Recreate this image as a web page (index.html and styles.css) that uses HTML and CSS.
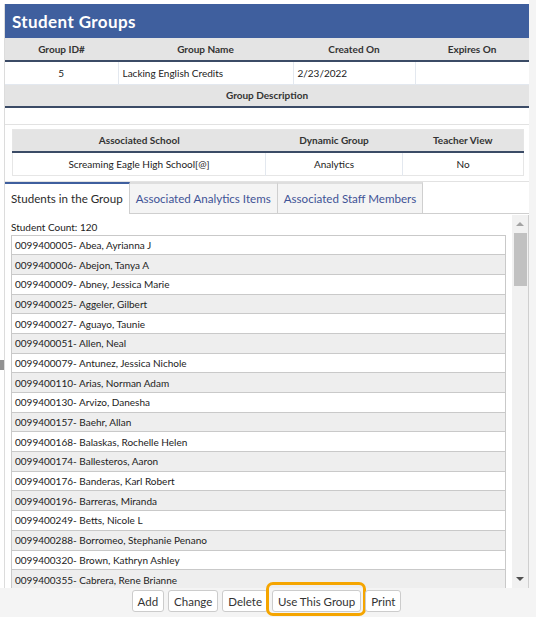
FILE: index.html
```html
<!DOCTYPE html>
<html lang="en">
<head>
<meta charset="utf-8">
<title>Student Groups</title>
<link rel="stylesheet" href="styles.css">
</head>
<body>
<div class="page">
  <div class="panel">
    <div class="title-bar">Student Groups</div>
    <table class="info">
      <colgroup><col class="c1"><col class="c2"><col class="c3"><col class="c4"></colgroup>
      <thead>
        <tr><th>Group ID#</th><th>Group Name</th><th>Created On</th><th>Expires On</th></tr>
      </thead>
      <tbody>
        <tr><td class="center">5</td><td>Lacking English Credits</td><td>2/23/2022</td><td></td></tr>
        <tr><th colspan="4" class="desc-head">Group Description</th></tr>
        <tr class="desc-row"><td colspan="4"></td></tr>
      </tbody>
    </table>
    <div class="school-wrap">
      <table class="school">
        <colgroup><col class="s1"><col class="s2"><col class="s3"></colgroup>
        <thead>
          <tr><th>Associated School</th><th>Dynamic Group</th><th>Teacher View</th></tr>
        </thead>
        <tbody>
          <tr><td>Screaming Eagle High School[@]</td><td>Analytics</td><td>No</td></tr>
        </tbody>
      </table>
    </div>
    <div class="tabs">
      <div class="tab active">Students in the Group</div>
      <div class="tab">Associated Analytics Items</div>
      <div class="tab">Associated Staff Members</div>
    </div>
    <div class="tab-panel">
      <div class="scroll-content">
        <div class="count">Student Count: 120</div>
        <div class="list">
          <div class="row">0099400005- Abea, Ayrianna J</div>
          <div class="row">0099400006- Abejon, Tanya A</div>
          <div class="row">0099400009- Abney, Jessica Marie</div>
          <div class="row">0099400025- Aggeler, Gilbert</div>
          <div class="row">0099400027- Aguayo, Taunie</div>
          <div class="row">0099400051- Allen, Neal</div>
          <div class="row">0099400079- Antunez, Jessica Nichole</div>
          <div class="row">0099400110- Arias, Norman Adam</div>
          <div class="row">0099400130- Arvizo, Danesha</div>
          <div class="row">0099400157- Baehr, Allan</div>
          <div class="row">0099400168- Balaskas, Rochelle Helen</div>
          <div class="row">0099400174- Ballesteros, Aaron</div>
          <div class="row">0099400176- Banderas, Karl Robert</div>
          <div class="row">0099400196- Barreras, Miranda</div>
          <div class="row">0099400249- Betts, Nicole L</div>
          <div class="row">0099400288- Borromeo, Stephanie Penano</div>
          <div class="row">0099400320- Brown, Kathryn Ashley</div>
          <div class="row">0099400355- Cabrera, Rene Brianne</div>
        </div>
      </div>
      <div class="scrollbar">
        <span class="arrow up"></span>
        <span class="thumb"></span>
        <span class="track"></span>
        <span class="arrow down"></span>
      </div>
    </div>
    <span class="grip"></span>
  </div>
</div>
<div class="actions">
  <button class="btn">Add</button>
  <button class="btn">Change</button>
  <button class="btn">Delete</button>
  <button class="btn highlighted">Use This Group</button>
  <button class="btn">Print</button>
</div>
</body>
</html>
```

FILE: styles.css
```css
* { box-sizing: border-box; }

html, body {
  margin: 0;
  padding: 0;
}

body {
  background: #f4f4f4;
  font-family: Lato, "Open Sans", sans-serif;
  color: #2b2b2b;
  width: 536px;
  height: 617px;
  overflow: hidden;
}

.page {
  width: 529px;
  height: 588px;
  background: #fff;
  padding: 4px 0 0 4px;
  overflow: hidden;
}

.panel {
  position: relative;
  height: 100%;
  display: flex;
  flex-direction: column;
  border-left: 1px solid #dcdcdc;
}

.title-bar {
  height: 34px;
  background: #3f5f9e;
  color: #fff;
  font-weight: 700;
  font-size: 17px;
  letter-spacing: 0.4px;
  padding-left: 7px;
  display: flex;
  align-items: center;
}

table {
  border-collapse: collapse;
  table-layout: fixed;
  font-size: 10px;
}

.info { width: 524px; }
.info .c1 { width: 113px; }
.info .c2 { width: 175px; }
.info .c3 { width: 122px; }
.info .c4 { width: 114px; }

th {
  background: #e4e4e4;
  font-weight: 700;
  color: #333;
  height: 23px;
  padding: 0 4px;
  border-bottom: 2px solid #3b4b66;
  text-align: center;
}

td {
  height: 23px;
  padding: 0 4px;
  color: #222;
  border-left: 1px solid #e3e8ef;
  border-bottom: 1px solid #e3e8ef;
}

td:first-child { border-left: none; }

.center { text-align: center; }

.desc-row td {
  height: 17px;
  border-bottom: 1px solid #e2e2e2;
}

.school-wrap {
  padding: 4px 7px 5px 7px;
  border-bottom: 1px solid #e2e2e2;
}

.school {
  width: 511px;
  border: 1px solid #e6e6e6;
}
.school .s1 { width: 253px; }
.school .s2 { width: 137px; }
.school .s3 { width: 121px; }
.school td { text-align: center; border-bottom: none; }

.tabs {
  display: flex;
  height: 32px;
  border-bottom: 1px solid #cfcfcf;
}

.tab {
  display: flex;
  align-items: center;
  padding: 0 6px;
  font-size: 11.6px;
  color: #3f5396;
  background: #f4f4f4;
  border-top: 2px solid #dedede;
  border-right: 1px solid #cfcfcf;
}

.tab.active {
  background: #fff;
  color: #2b2b2b;
  border-top: 2px solid #3f5f9e;
  margin-bottom: -1px;
}

.tab-panel {
  flex: 1;
  display: flex;
  min-height: 0;
  padding-top: 1px;
}

.scroll-content {
  flex: 1;
  overflow: hidden;
  padding: 5px 6px 0 6px;
}

.count {
  font-size: 10px;
  color: #222;
  height: 14px;
  line-height: 14px;
}

.list {
  border: 1px solid #c9c9c9;
  border-bottom: none;
  margin-top: 1px;
}

.row {
  height: 19.7px;
  border-bottom: 1px solid #c9c9c9;
  font-size: 10px;
  color: #222;
  padding-left: 3px;
  display: flex;
  align-items: center;
}

.row:nth-child(even) { background: #eeeeee; }

.scrollbar {
  width: 17px;
  background: #f1f1f1;
  display: flex;
  flex-direction: column;
  align-items: center;
  border-right: 1px solid #cfcfcf;
}

.arrow {
  width: 0;
  height: 0;
  border-left: 4px solid transparent;
  border-right: 4px solid transparent;
  margin: 7px 0;
}

.arrow.up { border-bottom: 4px solid #a3a3a3; }
.arrow.down { border-top: 4px solid #505050; }

.thumb {
  width: 13px;
  height: 53px;
  background: #c1c1c1;
}

.track { flex: 1; }

.grip {
  position: absolute;
  left: -5px;
  top: 356px;
  width: 4px;
  height: 10px;
  background-image: radial-gradient(circle, #8a8a8a 0.7px, transparent 0.8px);
  background-size: 2px 2px;
}

.actions {
  height: 29px;
  display: flex;
  justify-content: center;
  align-items: flex-start;
  gap: 4px;
  padding-top: 2px;
  padding-right: 3px;
}

.btn {
  position: relative;
  height: 22px;
  padding: 0 5px;
  font-family: Lato, "Open Sans", sans-serif;
  font-size: 11.5px;
  color: #333;
  background: #fff;
  border: 1px solid #cccccc;
  border-radius: 3px;
}

.btn.highlighted::after {
  content: "";
  position: absolute;
  left: -7px;
  right: -6px;
  top: -9px;
  bottom: -5px;
  border: 3px solid #f5a500;
  border-radius: 7px;
}
```
